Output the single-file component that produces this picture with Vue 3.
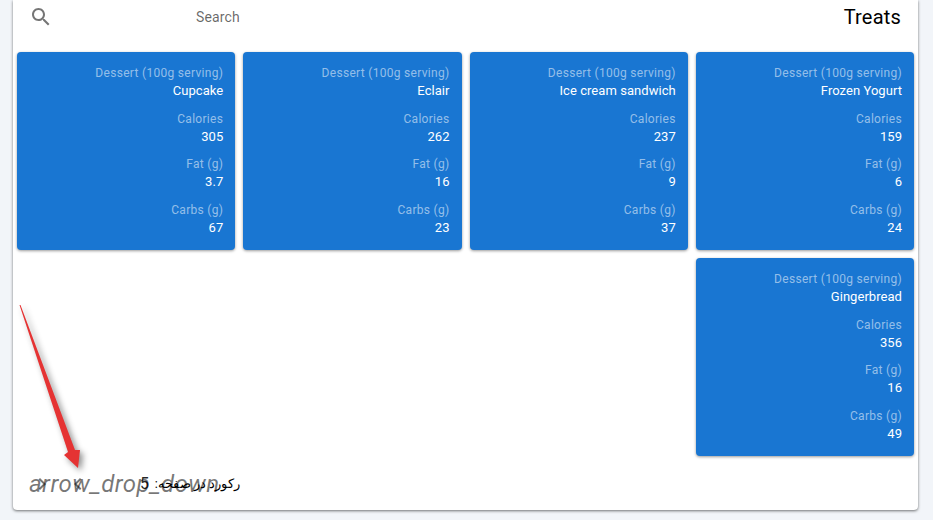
<script setup>
const fields = [
  ['Dessert (100g serving)', 'name'],
  ['Calories', 'calories'],
  ['Fat (g)', 'fat'],
  ['Carbs (g)', 'carbs'],
]
const treats = [
  { name: 'Cupcake', calories: 305, fat: 3.7, carbs: 67 },
  { name: 'Eclair', calories: 262, fat: 16, carbs: 23 },
  { name: 'Ice cream sandwich', calories: 237, fat: 9, carbs: 37 },
  { name: 'Frozen Yogurt', calories: 159, fat: 6, carbs: 24 },
  { name: 'Gingerbread', calories: 356, fat: 16, carbs: 49 },
]
</script>

<template>
  <div class="page">
    <main class="panel">
      <header class="toolbar">
        <svg class="search-icon" width="24" height="24" viewBox="0 0 24 24" aria-hidden="true">
          <path d="M15.5 14h-.79l-.28-.27C15.41 12.59 16 11.11 16 9.5 16 5.91 13.09 3 9.5 3S3 5.91 3 9.5 5.91 16 9.5 16c1.61 0 3.09-.59 4.23-1.57l.27.28v.79l5 4.99L20.49 19l-4.99-5zm-6 0C7.01 14 5 11.99 5 9.5S7.01 5 9.5 5 14 7.01 14 9.5 11.99 14 9.5 14z" />
        </svg>
        <span class="search-label">Search</span>
        <h1 class="title">Treats</h1>
      </header>

      <section class="grid">
        <article v-for="treat in treats" :key="treat.name" class="card">
          <div v-for="field in fields" :key="field[1]" class="field">
            <div class="label">{{ field[0] }}</div>
            <div class="value">{{ treat[field[1]] }}</div>
          </div>
        </article>
      </section>

      <footer class="footer">
        <i class="drop-icon">arrow_drop_down</i>
        <svg class="chevron chevron-a" width="24" height="24" viewBox="0 0 24 24" aria-hidden="true">
          <path d="M10 6 8.59 7.41 13.17 12l-4.58 4.59L10 18l6-6z" />
        </svg>
        <svg class="chevron chevron-b" width="24" height="24" viewBox="0 0 24 24" aria-hidden="true">
          <path d="M15.41 7.41 14 6l-6 6 6 6 1.41-1.41L10.83 12z" />
        </svg>
        <span class="count">5</span>
        <span class="per-page" dir="rtl">رکورد در صفحه:</span>
      </footer>

      <svg class="arrow" width="90" height="180" viewBox="0 0 90 180" aria-hidden="true">
        <polygon points="6.5,0 7.5,0 62,145 67,145 65,163 51,150 55,147" fill="#e53333" />
      </svg>
    </main>
  </div>
</template>

<style>
body {
  margin: 0;
  background: #f2f5f9;
}
</style>

<style scoped>
.page {
  box-sizing: border-box;
  height: 520px;
  padding: 0 15px 10px 13px;
  background: #f2f5f9;
  font-family: Roboto, "Noto Sans", sans-serif;
  overflow: hidden;
}
.panel {
  position: relative;
  height: 510px;
  display: flex;
  flex-direction: column;
  background: #fff;
  border-radius: 0 0 4px 4px;
  box-shadow: 0 1px 3px rgba(0, 0, 0, 0.55);
}
.toolbar {
  flex: none;
  height: 48px;
  padding: 0 17px 14px 16px;
  box-sizing: border-box;
  display: flex;
  align-items: center;
}
.search-icon {
  fill: rgba(0, 0, 0, 0.54);
  flex: none;
}
.search-label {
  margin-left: 143px;
  font-size: 14px;
  letter-spacing: 0.15px;
  color: rgba(0, 0, 0, 0.6);
}
.title {
  margin: 0 0 0 auto;
  font-size: 20px;
  font-weight: 400;
  letter-spacing: 0.2px;
  color: #000;
  line-height: 32px;
}
.grid {
  flex: none;
  display: grid;
  grid-template-columns: repeat(4, 1fr);
  gap: 8px;
  padding: 4px;
}
.card {
  height: 198px;
  box-sizing: border-box;
  padding: 12px 12px 0;
  background: #1976d2;
  border-radius: 4px;
  box-shadow: 0 1px 3px rgba(0, 0, 0, 0.4);
  text-align: right;
}
.card:nth-child(5) {
  grid-column: 4;
}
.field {
  height: 45.67px;
}
.label {
  font-size: 12px;
  letter-spacing: 0.3px;
  line-height: 18px;
  color: rgba(255, 255, 255, 0.54);
}
.value {
  font-size: 13px;
  letter-spacing: 0.05px;
  line-height: 18px;
  color: #fff;
}
.footer {
  position: relative;
  flex: 1;
}
.drop-icon {
  position: absolute;
  left: 16px;
  top: 8px;
  font-size: 24px;
  letter-spacing: 0.45px;
  line-height: 32px;
  font-style: italic;
  color: rgba(0, 0, 0, 0.54);
  white-space: nowrap;
}
.chevron {
  position: absolute;
  top: 12px;
  fill: rgba(0, 0, 0, 0.54);
}
.chevron-a {
  left: 17px;
}
.chevron-b {
  left: 53px;
}
.count {
  position: absolute;
  left: 127px;
  top: 14px;
  font-size: 16px;
  line-height: 20px;
  color: rgba(0, 0, 0, 0.87);
}
.per-page {
  position: absolute;
  left: 150px;
  top: 15px;
  width: 77px;
  font-size: 12.5px;
  line-height: 18px;
  color: #000;
  white-space: nowrap;
}
.arrow {
  position: absolute;
  left: 0;
  top: 305px;
  filter: drop-shadow(3px 3px 3px rgba(0, 0, 0, 0.45));
}
</style>
